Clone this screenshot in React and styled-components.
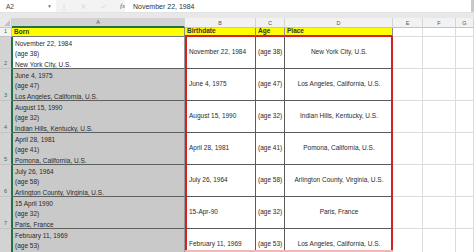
import styled, { createGlobalStyle } from "styled-components";
import { X, Check } from "lucide-react";

const GlobalStyle = createGlobalStyle`
  html, body {
    margin: 0;
    padding: 0;
    background: #ffffff;
  }
  body {
    font-family: "Liberation Sans", Arial, sans-serif;
    width: 474px;
    height: 252px;
    overflow: hidden;
  }
`;

const Sheet = styled.div`
  width: 474px;
  height: 252px;
  overflow: hidden;
  background: #ffffff;
`;

const FormulaBar = styled.div`
  display: flex;
  align-items: stretch;
  height: 12px;
  background: #f3f3f3;
  border-bottom: 1px solid #e2e2e2;
`;

const NameBox = styled.div`
  width: 56px;
  display: flex;
  align-items: center;
  justify-content: space-between;
  padding: 0 4px 0 6px;
  box-sizing: border-box;
  background: #ffffff;
  font-size: 6.5px;
  color: #444;
`;

const Caret = styled.span`
  font-size: 5px;
  color: #777;
`;

const Tools = styled.div`
  width: 69px;
  display: flex;
  align-items: center;
  gap: 13px;
  padding-left: 5px;
  box-sizing: border-box;
  color: #b8b8b8;
  font-size: 6px;
`;

const Fx = styled.span`
  font-family: "Liberation Serif", serif;
  font-style: italic;
  color: #666;
  font-size: 7px;
`;

const FormulaInput = styled.div`
  flex: 1;
  display: flex;
  align-items: center;
  padding-left: 8px;
  background: #ffffff;
  font-size: 7px;
  color: #333;
  border-right: 3px solid #c8c8c8;
`;

const Gap = styled.div`
  height: 5px;
  background: #e8e8e8;
`;

const Grid = styled.div`
  display: grid;
  grid-template-columns: 12px 173px 71px 29px 108px 30px 33px 18px;
  grid-template-rows: 10px 9px repeat(7, 32px);
  height: 234px;
  overflow: hidden;
  position: relative;
`;

const PinkEdge = styled.div`
  position: absolute;
  left: 185px;
  width: 208px;
  bottom: 0;
  height: 2px;
  background: #f2b8b8;
`;

const Corner = styled.div`
  background: #e9e9e9;
  border-right: 1px solid #d0d0d0;
  border-bottom: 1px solid #c4c4c4;
  box-sizing: border-box;
  position: relative;
  &::after {
    content: "";
    position: absolute;
    right: 1px;
    bottom: 1px;
    border-left: 6px solid transparent;
    border-bottom: 6px solid #c2c2c2;
  }
`;

const ColHead = styled.div`
  display: flex;
  align-items: center;
  justify-content: center;
  font-size: 5.5px;
  color: #555;
  box-sizing: border-box;
  background: ${(p) => (p.$active ? "#d3d3d3" : "#f2f2f2")};
  border-right: 1px solid #d4d4d4;
  border-bottom: ${(p) => (p.$active ? "2px solid #217346" : "1px solid #c4c4c4")};
`;

const RowHead = styled.div`
  display: flex;
  align-items: flex-end;
  justify-content: center;
  padding-bottom: 2px;
  font-size: 5.5px;
  color: ${(p) => (p.$active ? "#217346" : "#555")};
  box-sizing: border-box;
  background: ${(p) => (p.$active ? "#d3d3d3" : "#f2f2f2")};
  border-right: ${(p) => (p.$active ? "1px solid #217346" : "1px solid #c4c4c4")};
  border-bottom: 1px solid #c4c4c4;
`;

const HeadCell = styled.div`
  background: #ffff00;
  font-weight: bold;
  font-size: 6.5px;
  color: #333;
  display: flex;
  align-items: flex-end;
  padding: 0 0 1px 2px;
  box-sizing: border-box;
  border-right: 1px solid #8a8a8a;
  border-bottom: ${(p) => (p.$red ? "2px solid #d42020" : "1px solid #777")};
`;

const Cell = styled.div`
  box-sizing: border-box;
  display: flex;
  flex-direction: column;
  justify-content: ${(p) => (p.$top ? "flex-start" : "center")};
  align-items: ${(p) => (p.$center ? "center" : "flex-start")};
  padding: ${(p) => (p.$top ? "2px 0 0 2px" : "0 0 0 2px")};
  font-size: 6.5px;
  line-height: 10.4px;
  color: #2a2a2a;
  white-space: nowrap;
  overflow: hidden;
  background: ${(p) => p.$bg || "#ffffff"};
  border-bottom: 1px solid ${(p) => p.$line || "#5a5a5a"};
  border-right: ${(p) => p.$right || "1px solid #5a5a5a"};
  border-left: ${(p) => p.$left || "none"};
`;

const Blank = styled.div`
  box-sizing: border-box;
  border-right: 1px solid #dcdcdc;
  border-bottom: 1px solid #dcdcdc;
  background: #ffffff;
`;

const people = [
  { born: "November 22, 1984", age: "(age 38)", place: "New York City, U.S.", birth: "November 22, 1984" },
  { born: "June 4, 1975", age: "(age 47)", place: "Los Angeles, California, U.S.", birth: "June 4, 1975" },
  { born: "August 15, 1990", age: "(age 32)", place: "Indian Hills, Kentucky, U.S.", birth: "August 15, 1990" },
  { born: "April 28, 1981", age: "(age 41)", place: "Pomona, California, U.S.", birth: "April 28, 1981" },
  { born: "July 26, 1964", age: "(age 58)", place: "Arlington County, Virginia, U.S.", birth: "July 26, 1964" },
  { born: "15 April 1990", age: "(age 32)", place: "Paris, France", birth: "15-Apr-90" },
  { born: "February 11, 1969", age: "(age 53)", place: "Los Angeles, California, U.S.", birth: "February 11, 1969" },
];

const letters = ["A", "B", "C", "D", "E", "F", "G"];
const RED = "2px solid #d42020";

export default function App() {
  return (
    <Sheet>
      <GlobalStyle />
      <FormulaBar>
        <NameBox>
          A2 <Caret>▼</Caret>
        </NameBox>
        <Tools>
          <span>⋮</span>
          <X size={7} strokeWidth={1.5} />
          <Check size={7} strokeWidth={1.5} />
          <Fx>fx</Fx>
        </Tools>
        <FormulaInput>November 22, 1984</FormulaInput>
      </FormulaBar>
      <Gap />
      <Grid>
        <Corner />
        {letters.map((l) => (
          <ColHead key={l} $active={l === "A"}>
            {l}
          </ColHead>
        ))}

        <RowHead>1</RowHead>
        <HeadCell>Born</HeadCell>
        <HeadCell $red>Birthdate</HeadCell>
        <HeadCell $red>Age</HeadCell>
        <HeadCell $red>Place</HeadCell>
        <Blank />
        <Blank />
        <Blank />

        {people.map((p, i) => (
          <Row key={i} p={p} n={i + 2} first={i === 0} />
        ))}
        <PinkEdge />
      </Grid>
    </Sheet>
  );
}

function Row({ p, n, first }) {
  return (
    <>
      <RowHead $active>{n}</RowHead>
      <Cell
        $top
        $bg={first ? "#ffffff" : "#c9c9c9"}
        $left="1px solid #217346"
        $line="#606060"
        $right="1px solid #9a9a9a"
      >
        <span>{p.born}</span>
        <span>{p.age}</span>
        <span>{p.place}</span>
      </Cell>
      <Cell $left={RED}>{p.birth}</Cell>
      <Cell>{p.age}</Cell>
      <Cell $center $right={RED}>
        {p.place}
      </Cell>
      <Blank />
      <Blank />
      <Blank />
    </>
  );
}
